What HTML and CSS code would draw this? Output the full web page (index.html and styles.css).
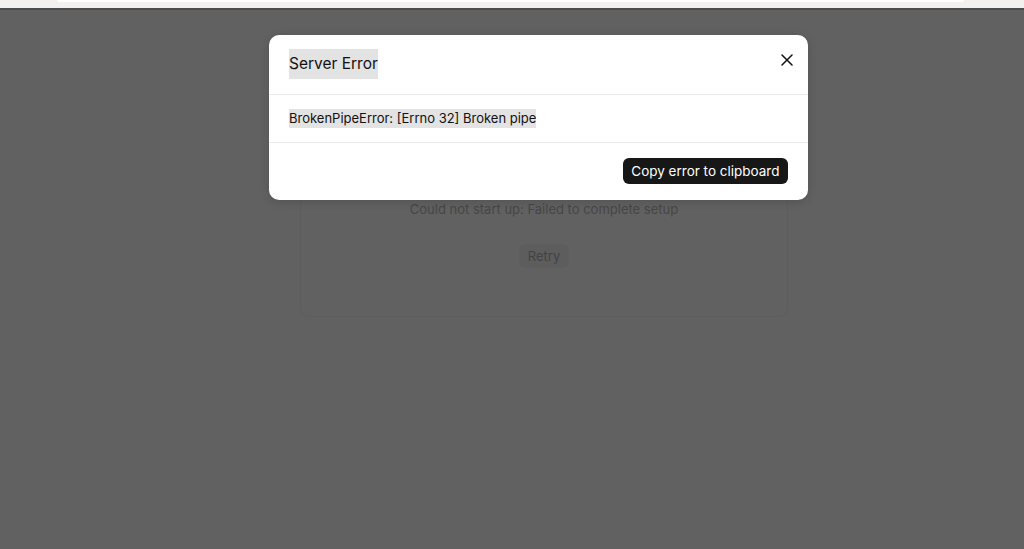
FILE: index.html
```html
<!DOCTYPE html>
<html lang="en">
<head>
  <meta charset="UTF-8" />
  <meta name="viewport" content="width=device-width, initial-scale=1.0" />
  <title>Server Error</title>
  <link rel="stylesheet" href="styles.css">
</head>
<body>
  <div class="topbar"><div class="topbar-tab"></div></div>

  <div class="app">
    <div class="startup-card">
      <p class="startup-msg">Could not start up: Failed to complete setup</p>
      <button class="btn-retry">Retry</button>
    </div>

    <!-- Error modal -->
    <div class="overlay">
      <div class="modal">
        <div class="modal-header">
          <h2><span class="hl">Server Error</span></h2>
          <button class="modal-close" aria-label="Close">
            <svg width="12" height="12" viewBox="0 0 12 12"><path d="M1 1L11 11M11 1L1 11" stroke="#111" stroke-width="1.5" stroke-linecap="round"/></svg>
          </button>
        </div>
        <div class="modal-body">
          <span class="hl">BrokenPipeError: [Errno 32] Broken pipe</span>
        </div>
        <div class="modal-footer">
          <button class="btn-dark">Copy error to clipboard</button>
        </div>
      </div>
    </div>
  </div>
</body>
</html>
```

FILE: styles.css
```css
* { box-sizing: border-box; margin: 0; padding: 0; }
html, body { height: 100%; }
body { font-family: Inter, "Noto Sans", sans-serif; background: #f2f2f2; display: flex; flex-direction: column; overflow: hidden; }

.topbar { height: 10px; background: #f2f1ef; border-bottom: 2px solid #4c4c4c; padding: 0 60px 0 57px; }
.topbar-tab { height: 2px; background: #fff; border-radius: 0 0 4px 4px; }

.app { flex: 1; position: relative; padding: 140px 0 0 300px; }

.startup-card { width: 488px; height: 167px; border: 1px solid #e8e8e8; border-radius: 8px; background: #f2f2f2; display: flex; flex-direction: column; align-items: center; padding-top: 50px; gap: 27px; }
.startup-msg { font-size: 13px; color: #b0b0b0; }
.btn-retry { font-family: inherit; font-size: 13px; color: #a6a6a6; background: #e9e9e9; border: none; border-radius: 6px; padding: 4px 9px; }

.overlay { position: absolute; inset: 0; background: rgba(0,0,0,0.6); padding: 25px 0 0 269px; }
.modal { width: 539px; background: #fff; border-radius: 10px; box-shadow: 0 2px 10px rgba(0,0,0,0.15); }
.modal-header { display: flex; justify-content: space-between; align-items: center; padding: 14px 15px 15px 20px; border-bottom: 1px solid #ececec; }
.modal-header h2 { display: flex; font-size: 15.5px; font-weight: 400; color: #111; }
.hl { display: inline-block; background: #e3e3e3; }
.modal-header .hl { line-height: 30px; }
.modal-close { background: none; border: none; width: 12px; height: 12px; margin-top: -8px; display: flex; }
.modal-body { display: flex; padding: 14px 20px; font-size: 13px; color: #111; border-bottom: 1px solid #ececec; }
.modal-body .hl { line-height: 19px; }
.modal-footer { display: flex; justify-content: flex-end; padding: 15px 20px 16px; }
.btn-dark { font-family: inherit; font-size: 13.5px; color: #fff; background: #171717; border: none; border-radius: 6px; height: 26px; padding: 0 8.5px; }
```
